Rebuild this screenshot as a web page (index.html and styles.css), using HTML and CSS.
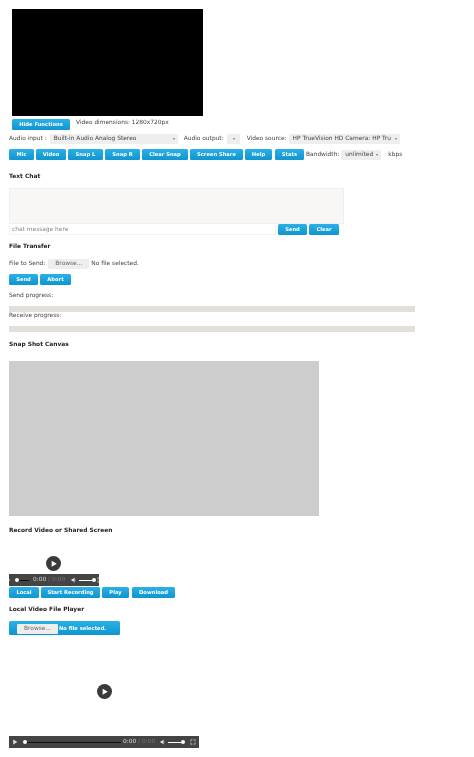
FILE: index.html
```html
<!DOCTYPE html>
<html>
<head>
<meta charset="utf-8">
<title>Video Chat</title>
<link rel="stylesheet" href="styles.css">
</head>
<body>
<div class="video-wrap">
  <div class="local-video"></div>
  <div class="row dims-row">
    <a class="btn hide-btn">Hide Functions</a>
    <span class="dims">Video dimensions: 1280x720px</span>
  </div>
</div>

<div class="row select-row">
  <span class="label">Audio input :</span>
  <span class="select audio-in">Built-in Audio Analog Stereo<i class="caret"></i></span>
  <span class="label audio-out-label">Audio output:</span>
  <span class="select audio-out"><i class="caret"></i></span>
  <span class="label video-src-label">Video source:</span>
  <span class="select video-src">HP TrueVision HD Camera: HP Tru<i class="caret"></i></span>
</div>

<div class="row button-row">
  <a class="btn w25">Mic</a>
  <a class="btn w30">Video</a>
  <a class="btn w35">Snap L</a>
  <a class="btn w35">Snap R</a>
  <a class="btn w46">Clear Snap</a>
  <a class="btn w53">Screen Share</a>
  <a class="btn w27 wide-gap">Help</a>
  <a class="btn w29">Stats</a>
  <span class="label bw-label">Bandwidth:</span>
  <span class="select bandwidth">unlimited<i class="caret"></i></span>
  <span class="label kbps">kbps</span>
</div>

<h3 class="chat-title">Text Chat</h3>
<div class="chat-log"></div>
<div class="row chat-row">
  <span class="chat-input">chat message here</span>
  <a class="btn w29">Send</a>
  <a class="btn w30">Clear</a>
</div>

<h3 class="file-title">File Transfer</h3>
<div class="row file-row">
  <span class="label">File to Send:</span>
  <span class="browse">Browse...</span>
  <span class="label">No file selected.</span>
</div>
<div class="row send-row">
  <a class="btn w29">Send</a>
  <a class="btn w31">Abort</a>
</div>
<div class="progress-label first">Send progress:</div>
<div class="progress"></div>
<div class="progress-label">Receive progress:</div>
<div class="progress"></div>

<h3 class="snap-title">Snap Shot Canvas</h3>
<div class="snap-canvas"></div>

<h3 class="record-title">Record Video or Shared Screen</h3>
<div class="player small-player">
  <span class="big-play"><svg viewBox="0 0 16 16"><path d="M6 5v6.500l5.500-3.250z"/></svg></span>
  <div class="controls">
    <svg class="play" viewBox="0 0 10 10"><path d="M2 1v8l7-4z"/></svg>
    <span class="dot"></span><span class="track short"></span>
    <span class="time">0:00 <em>/ 0:00</em></span>
    <svg class="speaker" viewBox="0 0 10 10"><path d="M1 3.500h2l3-2.500v8l-3-2.500h-2zM7 3.500q1.500 1.500 0 3z"/></svg>
    <span class="track volume"></span><span class="dot"></span>
    <svg class="full" viewBox="0 0 10 10"><path d="M1 1h3v1h-2v2h-1zM6 1h3v3h-1v-2h-2zM1 6h1v2h2v1h-3zM8 6h1v3h-3v-1h2z"/></svg>
  </div>
</div>
<div class="row record-row">
  <a class="btn w30">Local</a>
  <a class="btn w59">Start Recording</a>
  <a class="btn w27 wide-gap">Play</a>
  <a class="btn w43">Download</a>
</div>

<h3 class="local-title">Local Video File Player</h3>
<div class="file-btn">
  <span class="browse">Browse...</span>
  <span>No file selected.</span>
</div>
<div class="player big-player">
  <span class="big-play"><svg viewBox="0 0 16 16"><path d="M6 5v6.500l5.500-3.250z"/></svg></span>
  <div class="controls">
    <svg class="play" viewBox="0 0 10 10"><path d="M2 1v8l7-4z"/></svg>
    <span class="dot"></span><span class="track long"></span>
    <span class="time">0:00 <em>/ 0:00</em></span>
    <svg class="speaker" viewBox="0 0 10 10"><path d="M1 3.500h2l3-2.500v8l-3-2.500h-2zM7 3.500q1.500 1.500 0 3z"/></svg>
    <span class="track volume"></span><span class="dot"></span>
    <svg class="full" viewBox="0 0 10 10"><path d="M1 1h3v1h-2v2h-1zM6 1h3v3h-1v-2h-2zM1 6h1v2h2v1h-3zM8 6h1v3h-3v-1h2z"/></svg>
  </div>
</div>
</body>
</html>
```

FILE: styles.css
```css
*{padding:0;margin:0;box-sizing:border-box;}
html{background:#fff;}
body{color:#444;font-family:"DejaVu Sans",sans-serif;font-size:5.9px;line-height:8px;padding-left:9px;text-rendering:geometricPrecision;will-change:transform;}
h3{font-size:5.9px;line-height:8px;color:#222;font-weight:bold;}
.row{display:flex;align-items:center;}
.label{white-space:nowrap;}

.btn{display:block;height:11px;padding-top:1px;line-height:10px;text-align:center;color:#fff;font-weight:bold;font-size:5.2px;white-space:nowrap;border-radius:1.5px;background:linear-gradient(#2bb0e6,#0f95cf);margin-right:2px;}
.wide-gap{margin-right:3px;}
.w25{width:25px;}
.w27{width:27px;}
.w29{width:29px;}
.w30{width:30px;}
.w31{width:31px;}
.w35{width:35px;}
.w43{width:43px;}
.w46{width:46px;}
.w53{width:53px;}
.w59{width:59px;}

.video-wrap{padding:9px 0 0 3px;}
.local-video{width:191px;height:107px;background:#000;}
.dims-row{margin-top:3px;height:11px;}
.hide-btn{width:58px;margin-right:6px;}
.dims{position:relative;top:-2px;}

.select{display:flex;align-items:center;justify-content:space-between;height:10px;padding:0 3px 0 4px;background:#eee;border-radius:1px;white-space:nowrap;overflow:hidden;}
.caret{width:0;height:0;border-left:1.500px solid transparent;border-right:1.500px solid transparent;border-top:2px solid #777;margin-left:2px;flex:none;}

.select-row{margin-top:3px;height:11px;}
.audio-in{width:128px;margin-left:3px;}
.audio-out-label{margin-left:6px;}
.audio-out{width:13px;margin-left:3px;}
.video-src-label{margin-left:7px;}
.video-src{width:111px;margin-left:2px;}

.button-row{margin-top:5px;}
.bandwidth{width:40px;margin-left:2px;}
.kbps{margin-left:7px;}

.chat-title{margin-top:13px;}
.chat-log{width:335px;height:36px;margin-top:7px;background:#f8f7f5;border:1px solid #f0efed;}
.chat-input{width:267px;height:10px;line-height:10px;padding-left:2px;margin-right:2px;color:#888;border:1px solid #f2f2f2;border-top:none;}

.file-title{margin-top:8px;}
.file-row{margin-top:8px;height:10px;}
.browse{display:block;width:41px;height:10px;line-height:10px;text-align:center;color:#666;background:#eee;border-radius:1px;margin:0 2px 0 3px;}
.send-row{margin-top:5px;}
.progress-label.first{margin-top:7px;}
.progress{width:406px;height:6px;margin-top:6px;background:#e3dfdb;}

.snap-title{margin-top:9px;}
.snap-canvas{width:310px;height:155px;margin-top:12px;background:#cdcdcd;}

.record-title{margin-top:11px;}
.player{position:relative;}
.small-player{width:90px;height:41px;margin-top:10px;}
.big-player{width:190px;height:106px;margin-top:7px;}
.big-play{position:absolute;width:15px;height:15px;border-radius:50%;background:#3a3a3a;}
.big-play svg{display:block;width:15px;height:15px;fill:#fff;}
.small-player .big-play{left:37px;top:11px;}
.big-player .big-play{left:88px;top:42px;}
.controls{position:absolute;left:0;bottom:0;width:100%;height:12px;background:#444;display:flex;align-items:center;padding:0 3px;color:#ddd;font-size:5.9px;overflow:hidden;}
.small-player .controls{padding-left:0;}
.controls em{font-style:normal;color:#777;}
.dot{width:4px;height:4px;border-radius:50%;background:#fff;flex:none;}
.track{height:1px;background:#111;flex:none;}
.track.short{width:10px;}
.track.long{width:94px;}
.track.volume{width:13px;background:#fff;margin-left:2px;}
.time{margin:0 5px 0 2px;white-space:nowrap;}
.small-player .time{margin:0 6px 0 4px;}
.speaker,.play,.full{width:6px;height:6px;fill:#ddd;flex:none;}
.play{margin-right:5px;}
.full{margin-left:5px;}
.small-player .play{margin:0 4px 0 -4px;}
.small-player .full{margin-left:1px;}

.record-row{margin-top:1px;}
.local-title{margin-top:8px;}
.file-btn{display:flex;align-items:center;width:111px;height:14px;margin-top:7px;padding:1px 0 0 5px;color:#fff;font-weight:bold;font-size:5.2px;border-radius:1.500px;background:linear-gradient(#2bb0e6,#0f95cf);}
.file-btn .browse{font-weight:normal;font-size:5.9px;margin:0 1px 0 3px;}
```
